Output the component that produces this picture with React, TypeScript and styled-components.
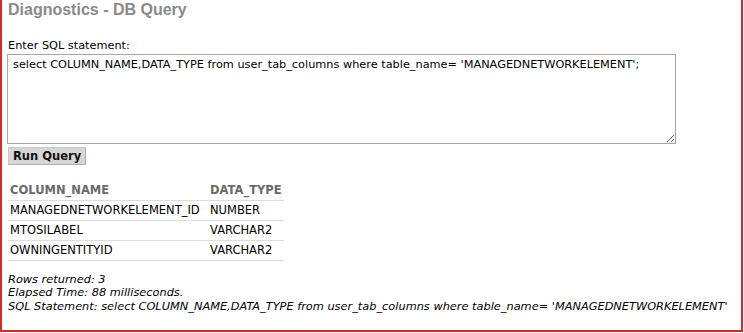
import styled, { createGlobalStyle } from 'styled-components';

const GlobalStyle = createGlobalStyle`
    html, body {
        margin: 0;
        padding: 0;
        background: #ffffff;
    }
    body {
        font-family: "DejaVu Sans", Verdana, sans-serif;
        font-size: 12px;
        color: #000;
    }
`;

const Frame = styled.div`
    box-sizing: border-box;
    width: 743px;
    height: 332px;
    border-left: 2px solid #d42a2a;
    border-right: 2px solid #d42a2a;
    border-bottom: 2px solid #d42a2a;
    padding: 0 6px;
    overflow: hidden;
`;

const Title = styled.h1`
    margin: 0;
    padding-top: 1px;
    font-family: "Liberation Sans", Arial, sans-serif;
    font-size: 16px;
    font-weight: bold;
    color: #8a8a8a;
    line-height: 18px;
`;

const Label = styled.label`
    display: block;
    margin-top: 20px;
    font-size: 11.3px;
    line-height: 14px;
`;

const QueryBox = styled.textarea`
    display: block;
    box-sizing: border-box;
    width: 669px;
    height: 90px;
    margin: 1px 0 0 -1px;
    padding: 3px 5px;
    border: 1px solid #a5a5a5;
    font-family: "DejaVu Sans", Verdana, sans-serif;
    font-size: 11.3px;
    line-height: 14px;
    color: #000;
    resize: both;
    outline: none;
`;

const Button = styled.button`
    display: block;
    margin-top: 3px;
    padding: 1px 4px;
    height: 18px;
    border: 1px solid #c9c9c9;
    border-right-color: #b0b0b0;
    border-bottom-color: #b0b0b0;
    background: #d6d6d6;
    font-family: "DejaVu Sans", Verdana, sans-serif;
    font-size: 11.5px;
    font-weight: bold;
    line-height: 14px;
    color: #111;
    cursor: pointer;
`;

const ResultTable = styled.table`
    margin-top: 15px;
    border-collapse: collapse;
    font-size: 11.5px;
`;

const Head = styled.th`
    text-align: left;
    padding: 2px;
    height: 20px;
    box-sizing: border-box;
    color: #6a6a6a;
    font-weight: bold;
    border-bottom: 1px solid #dcdcdc;
    white-space: nowrap;
`;

const Cell = styled.td`
    padding: 2px;
    height: 20px;
    box-sizing: border-box;
    border-bottom: 1px solid #dcdcdc;
    white-space: nowrap;
`;

const Stats = styled.div`
    margin-top: 12px;
    font-size: 11.35px;
    font-style: italic;
    line-height: 13.5px;
    white-space: nowrap;
`;

const query = "select COLUMN_NAME,DATA_TYPE from user_tab_columns where table_name= 'MANAGEDNETWORKELEMENT';";

const rows = [
    ['MANAGEDNETWORKELEMENT_ID', 'NUMBER'],
    ['MTOSILABEL', 'VARCHAR2'],
    ['OWNINGENTITYID', 'VARCHAR2'],
];

const App = () => {
    return (
        <>
            <GlobalStyle />
            <Frame>
                <Title>Diagnostics - DB Query</Title>
                <Label htmlFor="sql">Enter SQL statement:</Label>
                <QueryBox id="sql" defaultValue={query} spellCheck={false} />
                <Button>Run Query</Button>
                <ResultTable>
                    <thead>
                        <tr>
                            <Head style={{ width: 200 }}>COLUMN_NAME</Head>
                            <Head>DATA_TYPE</Head>
                        </tr>
                    </thead>
                    <tbody>
                        {rows.map(r => (
                            <tr key={r[0]}>
                                <Cell>{r[0]}</Cell>
                                <Cell>{r[1]}</Cell>
                            </tr>
                        ))}
                    </tbody>
                </ResultTable>
                <Stats>
                    <div>Rows returned: 3</div>
                    <div>Elapsed Time: 88 milliseconds.</div>
                    <div>SQL Statement: select COLUMN_NAME,DATA_TYPE from user_tab_columns where table_name= 'MANAGEDNETWORKELEMENT'</div>
                </Stats>
            </Frame>
        </>
    );
};

export default App;
